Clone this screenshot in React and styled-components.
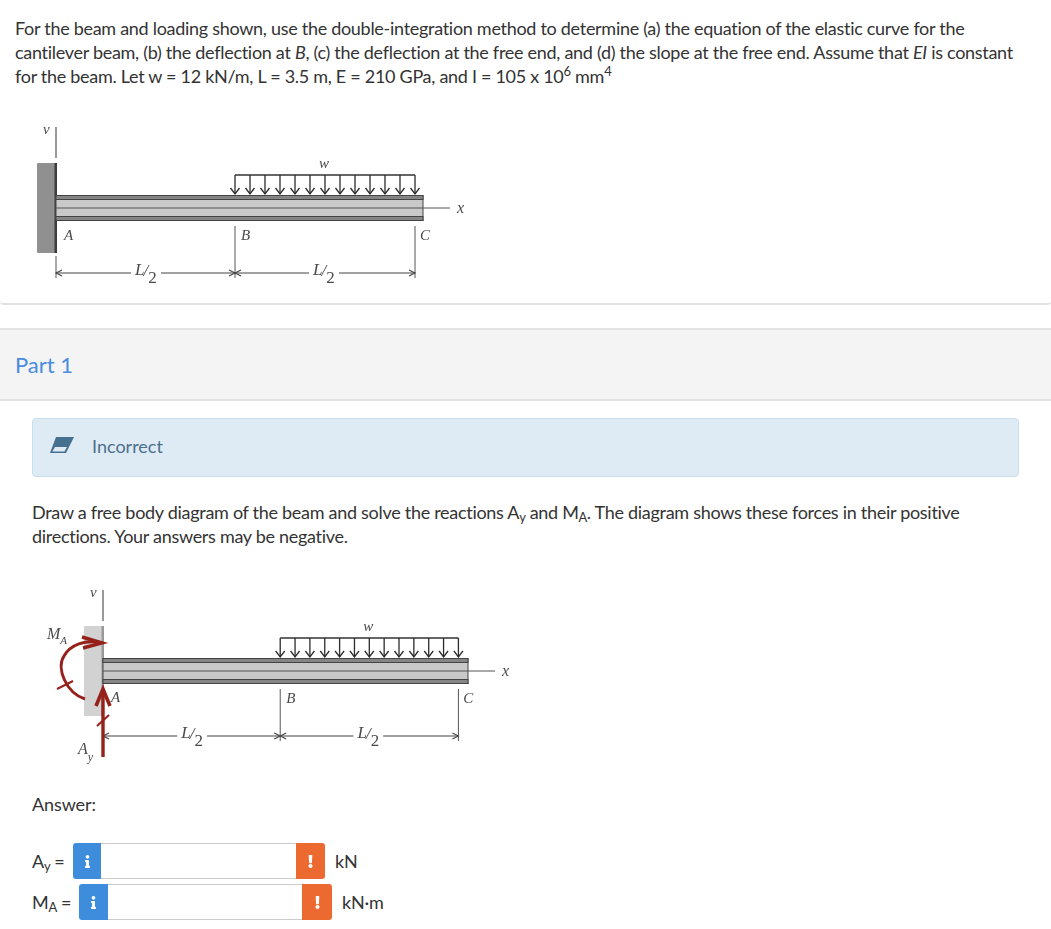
import styled, { createGlobalStyle } from "styled-components"
import { FaInfo, FaExclamation } from "react-icons/fa"

const Global = createGlobalStyle`
    body {
        margin: 0;
        background: #fff;
        color: #333;
        font-family: Lato, "Liberation Sans", sans-serif;
        font-size: 18px;
        line-height: 24px;
    }
`

const Pagina = styled.div`
    width: 1051px;
    height: 929px;
    overflow: hidden;
`

const Enunciado = styled.section`
    padding: 16px 15px 0;
    height: 305px;
    box-sizing: border-box;
    border-bottom: 2px solid #e0e0e0;
    border-radius: 0 0 4px 4px;
    margin-bottom: 23px;
`

const Texto = styled.p`
    margin: 0;
    letter-spacing: -0.29px;
    max-width: ${(p) => p.$largura}px;
`

const Sup = styled.sup`
    font-size: 13px;
    line-height: 0;
`

const Sub = styled.sub`
    font-size: 13px;
    line-height: 0;
    vertical-align: -3px;
    letter-spacing: -0.6px;
`

const Figura = styled.svg`
    display: block;
    filter: blur(0.4px);
    margin: ${(p) => p.$margem};
`

const Rotulos = styled.g`
    font-family: "Liberation Serif", serif;
    font-style: italic;
    fill: #4a4a4a;
`

const CabecalhoParte = styled.header`
    height: 73px;
    box-sizing: border-box;
    border-top: 2px solid #e3e3e3;
    border-bottom: 2px solid #e3e3e3;
    background: #f4f4f4;
    padding: 0 15px;
    display: flex;
    align-items: center;
    color: #4a8ce0;
    font-size: 22px;
`

const Corpo = styled.section`
    padding: 17px 32px 0;
`

const Alerta = styled.div`
    height: 59px;
    box-sizing: border-box;
    background: #deebf5;
    border: 1px solid #c8e0ee;
    border-radius: 4px;
    display: flex;
    align-items: center;
    gap: 17px;
    padding: 0 0 3px 16px;
    color: #4d6f8c;
    margin-bottom: 23px;
`

const IconeBorracha = styled.svg`
    display: block;
    margin-bottom: 3px;
`

const Resposta = styled.div`
    margin: 0 0 27px;
    letter-spacing: -0.1px;
`

const LinhaResposta = styled.div`
    display: flex;
    align-items: center;
    height: 36px;
    margin-bottom: 5px;
`

const Rotulo = styled.span`
    width: ${(p) => p.$largura}px;
    flex-shrink: 0;
    letter-spacing: -0.3px;
`

const Botao = styled.span`
    width: ${(p) => p.$largura}px;
    height: 36px;
    flex-shrink: 0;
    display: flex;
    align-items: center;
    justify-content: center;
    color: #fff;
    font-size: 13px;
    background: ${(p) => p.$cor};
    border-radius: ${(p) => p.$raio};
`

const Campo = styled.input`
    width: ${(p) => p.$largura}px;
    height: 36px;
    box-sizing: border-box;
    border: 1px solid #ccc;
    border-width: 1px 0;
    padding: 0 8px;
    background: #fff;
    outline: none;
`

const Unidade = styled.span`
    margin-left: 10px;
    letter-spacing: -0.2px;
`

function Borracha() {
    return (
        <IconeBorracha width="26" height="18" viewBox="0 0 26 18">
            <path d="M7 1h18l-8 16H1z" fill="#46708f" />
            <path d="M6 11h12l-2.6 4.6H3.4z" fill="#deebf5" />
        </IconeBorracha>
    )
}

function Dimensao({ x, y }) {
    return (
        <text x={x} y={y} fontSize="17">
            L
            <tspan dx="-1" dy="1">/</tspan>
            <tspan dy="7" fontStyle="normal">2</tspan>
        </text>
    )
}

// desenho da viga; as coordenadas sao locais ao svg
function Viga({ largura, altura, margem, children, parede, ox, comp = 1, viga = 367 }) {
    const px = (d) => ox + d * comp
    const setas = Array.from({ length: 13 }, (_, i) => px(179 + i * 15))
    return (
        <Figura width={largura} height={altura} viewBox={`0 0 ${largura} ${altura}`} $margem={margem}>
            <line x1={ox} y1="17" x2={ox} y2="48" stroke="#555" strokeWidth="1.2" />
            <rect x={ox - 19} y="53" width="19" height="90" rx="1" fill={parede} />
            <rect x={ox - 1.5} y="53" width="2.5" height="90" fill={parede === "#909090" ? "#3c3c3c" : "#999"} />

            <rect x={ox} y="85.5" width={viga} height="25" fill="#c9c9c9" stroke="#444" strokeWidth="1" />
            <rect x={ox} y="85.5" width={viga} height="4" fill="#858585" stroke="#444" strokeWidth="1" />
            <rect x={ox} y="106.5" width={viga} height="4" fill="#858585" stroke="#444" strokeWidth="1" />
            <line x1={ox} y1="98" x2={ox + viga + 27} y2="98" stroke="#555" strokeWidth="1" />

            <line x1={px(179)} y1="65" x2={px(359)} y2="65" stroke="#333" strokeWidth="1.3" />
            {setas.map((x) => (
                <g key={x} fill="none" stroke="#2c2c2c" strokeWidth="1.3">
                    <line x1={x} y1="65" x2={x} y2="84" />
                    <path d={`M${x - 4.5} 78l4.5 6 4.5-6`} />
                </g>
            ))}

            <line x1={px(179)} y1="116" x2={px(179)} y2="168" stroke="#555" strokeWidth="1" />
            <line x1={px(359)} y1="116" x2={px(359)} y2="168" stroke="#555" strokeWidth="1" />
            <line x1={ox} y1="146" x2={ox} y2="168" stroke="#555" strokeWidth="1" />

            <g stroke="#444" strokeWidth="1.1" fill="none">
                <line x1={ox} y1="163" x2={px(75)} y2="163" />
                <line x1={px(105)} y1="163" x2={px(179)} y2="163" />
                <line x1={px(179)} y1="163" x2={px(253)} y2="163" />
                <line x1={px(283)} y1="163" x2={px(359)} y2="163" />
                <path d={`M${ox + 6} 160l-6 3 6 3`} />
                <path d={`M${px(179) - 6} 160l6 3-6 3`} />
                <path d={`M${px(179) + 6} 160l-6 3 6 3`} />
                <path d={`M${px(359) - 6} 160l6 3-6 3`} />
            </g>

            <Rotulos>
                <text x={ox - 13} y="24" fontSize="15">v</text>
                <text x={ox + viga + 34} y="103" fontSize="16">x</text>
                <text x={px(263)} y="58" fontSize="15">w</text>
                <text x={px(185)} y="130" fontSize="15">B</text>
                <text x={px(364)} y="130" fontSize="15">C</text>
                <Dimensao x={px(79)} y="165" />
                <Dimensao x={px(257)} y="165" />
            </Rotulos>
            {children}
        </Figura>
    )
}

export default function App() {
    return (
        <Pagina>
            <Global />
            <Enunciado>
                <Texto>
                    For the beam and loading shown, use the double-integration method to determine (a) the equation of the elastic curve for the cantilever beam, (b) the deflection at <i>B</i>, (c) the deflection at the free end, and (d) the slope at the free end. Assume that <i>EI</i> is constant for the beam. Let w = 12 kN/m, L = 3.5 m, E = 210 GPa, and I = 105 x 10<Sup>6</Sup> mm<Sup>4</Sup>
                </Texto>
                <Viga largura={470} altura={180} margem="22px 0 0 -15px" parede="#909090" ox={56}>
                    <Rotulos>
                        <text x="64" y="130" fontSize="15">A</text>
                    </Rotulos>
                </Viga>
            </Enunciado>
            <CabecalhoParte>Part 1</CabecalhoParte>
            <Corpo>
                <Alerta>
                    <Borracha />
                    Incorrect
                </Alerta>
                <Texto $largura={960}>
                    Draw a free body diagram of the beam and solve the reactions A<Sub>y</Sub> and M<Sub>A</Sub>. The diagram shows these forces in their positive directions. Your answers may be negative.
                </Texto>
                <Viga largura={515} altura={195} margem="25px 0 24px -32px" parede="#d2d2d2" ox={103} comp={0.99} viga={365}>
                    <Rotulos>
                        <text x="111" y="129" fontSize="15">A</text>
                        <text x="47" y="66" fontSize="16">M<tspan dy="5" fontSize="11">A</tspan></text>
                        <text x="78" y="181" fontSize="16">A<tspan dy="7" fontSize="12">y</tspan></text>
                    </Rotulos>
                    <g fill="none" stroke="#96201a" strokeWidth="3">
                        <path d="M85 126C66 120 56 95 64 83 70 72 85 66 102 70" />
                        <path d="M82 64l20 6-19 5" strokeWidth="3.4" />
                        <path d="M57 116l16-8" strokeWidth="2" />
                        <path d="M103 184V117" strokeWidth="3.4" />
                        <path d="M96 133l7-17 7 17" strokeWidth="3.6" />
                        <path d="M97 153l12-11" strokeWidth="2" />
                    </g>
                </Viga>
                <Resposta>Answer:</Resposta>
                <LinhaResposta>
                    <Rotulo $largura={41}>A<Sub>y</Sub> =</Rotulo>
                    <Botao $largura={28} $cor="#3e8ddd" $raio="3px 0 0 3px"><FaInfo /></Botao>
                    <Campo $largura={195} />
                    <Botao $largura={29} $cor="#ec6a2f" $raio="0 3px 3px 0"><FaExclamation /></Botao>
                    <Unidade>kN</Unidade>
                </LinhaResposta>
                <LinhaResposta>
                    <Rotulo $largura={47}>M<Sub>A</Sub> =</Rotulo>
                    <Botao $largura={29} $cor="#3e8ddd" $raio="3px 0 0 3px"><FaInfo /></Botao>
                    <Campo $largura={194} />
                    <Botao $largura={30} $cor="#ec6a2f" $raio="0 3px 3px 0"><FaExclamation /></Botao>
                    <Unidade>kN·m</Unidade>
                </LinhaResposta>
            </Corpo>
        </Pagina>
    )
}
